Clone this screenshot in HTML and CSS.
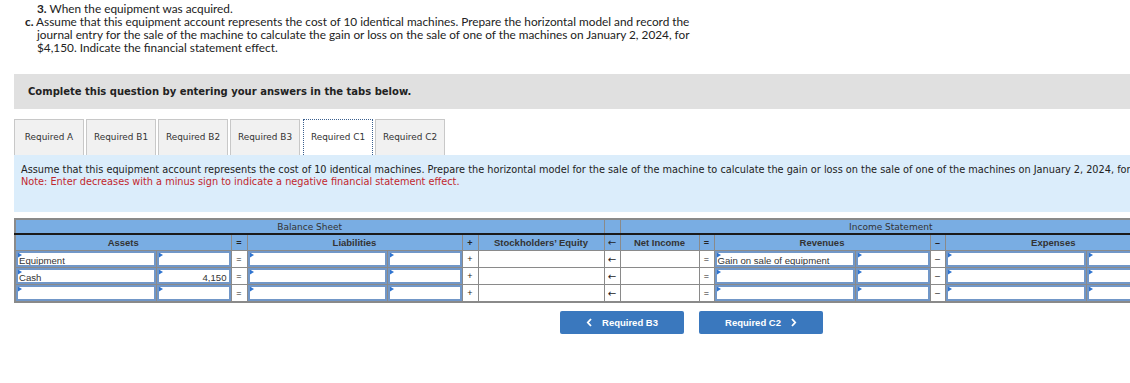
FILE: index.html
```html
<!DOCTYPE html>
<html lang="en">
<head>
  <meta charset="UTF-8" />
  <title>Horizontal Model - Required C1</title>
  <link rel="stylesheet" href="styles.css">
</head>
<body>
  <div class="question">
    <p class="sub"><b>3.</b> When the equipment was acquired.</p>
    <p class="part"><b>c.</b> Assume that this equipment account represents the cost of 10 identical machines. Prepare the horizontal model and record the journal entry for the sale of the machine to calculate the gain or loss on the sale of one of the machines on January 2, 2024, for $4,150. Indicate the financial statement effect.</p>
  </div>

  <div class="panel">
    <div class="prompt">Complete this question by entering your answers in the tabs below.</div>

    <div class="tabs">
      <div class="tab">Required A</div>
      <div class="tab">Required B1</div>
      <div class="tab">Required B2</div>
      <div class="tab">Required B3</div>
      <div class="tab active">Required C1</div>
      <div class="tab">Required C2</div>
    </div>

    <div class="info">
      <div class="line">Assume that this equipment account represents the cost of 10 identical machines. Prepare the horizontal model for the sale of the machine to calculate the gain or loss on the sale of one of the machines on January 2, 2024, for $4,150.</div>
      <div class="note">Note: Enter decreases with a minus sign to indicate a negative financial statement effect.</div>
    </div>

    <table class="model">
      <colgroup>
        <col style="width:141px"><col style="width:75px"><col style="width:16px">
        <col style="width:140px"><col style="width:75px"><col style="width:16px">
        <col style="width:126px"><col style="width:16px"><col style="width:79px">
        <col style="width:15px"><col style="width:141px"><col style="width:75px">
        <col style="width:15px"><col style="width:141px"><col style="width:76px">
      </colgroup>
      <tr class="group">
        <th colspan="7">Balance Sheet</th>
        <th></th>
        <th colspan="7">Income Statement</th>
      </tr>
      <tr class="heads">
        <th colspan="2">Assets</th>
        <th class="op">=</th>
        <th colspan="2">Liabilities</th>
        <th class="op">+</th>
        <th>Stockholders’ Equity</th>
        <th class="op arrow">←</th>
        <th>Net Income</th>
        <th class="op">=</th>
        <th colspan="2">Revenues</th>
        <th class="op">–</th>
        <th colspan="2">Expenses</th>
      </tr>
      <tr>
        <td class="in"><div class="box">Equipment</div></td>
        <td class="in"><div class="box num"></div></td>
        <td class="op">=</td>
        <td class="in"><div class="box"></div></td>
        <td class="in"><div class="box num"></div></td>
        <td class="op">+</td>
        <td></td>
        <td class="op arrow">←</td>
        <td></td>
        <td class="op">=</td>
        <td class="in"><div class="box">Gain on sale of equipment</div></td>
        <td class="in"><div class="box num"></div></td>
        <td class="op">–</td>
        <td class="in"><div class="box"></div></td>
        <td class="in"><div class="box num"></div></td>
      </tr>
      <tr>
        <td class="in"><div class="box">Cash</div></td>
        <td class="in"><div class="box num">4,150</div></td>
        <td class="op">=</td>
        <td class="in"><div class="box"></div></td>
        <td class="in"><div class="box num"></div></td>
        <td class="op">+</td>
        <td></td>
        <td class="op arrow">←</td>
        <td></td>
        <td class="op">=</td>
        <td class="in"><div class="box"></div></td>
        <td class="in"><div class="box num"></div></td>
        <td class="op">–</td>
        <td class="in"><div class="box"></div></td>
        <td class="in"><div class="box num"></div></td>
      </tr>
      <tr>
        <td class="in"><div class="box"></div></td>
        <td class="in"><div class="box num"></div></td>
        <td class="op">=</td>
        <td class="in"><div class="box"></div></td>
        <td class="in"><div class="box num"></div></td>
        <td class="op">+</td>
        <td></td>
        <td class="op arrow">←</td>
        <td></td>
        <td class="op">=</td>
        <td class="in"><div class="box"></div></td>
        <td class="in"><div class="box num"></div></td>
        <td class="op">–</td>
        <td class="in"><div class="box"></div></td>
        <td class="in"><div class="box num"></div></td>
      </tr>
    </table>

    <div class="nav">
      <button class="nav-btn">
        <svg class="chev" width="7" height="9" viewBox="0 0 7 9"><polyline points="5,1 1.8,4.5 5,8" fill="none" stroke="#fff" stroke-width="1.8"/></svg>
        Required B3
      </button>
      <button class="nav-btn">
        Required C2
        <svg class="chev" width="7" height="9" viewBox="0 0 7 9"><polyline points="2,1 5.2,4.5 2,8" fill="none" stroke="#fff" stroke-width="1.8"/></svg>
      </button>
    </div>
  </div>
</body>
</html>
```

FILE: styles.css
```css
html {
  overflow: hidden;
}

body {
  margin: 0;
  font-family: Lato, 'Open Sans', sans-serif;
  color: #222;
  width: 1200px;
}

.question {
  padding-top: 2px;
  font-size: 11.8px;
  line-height: 13px;
}

.question p {
  margin: 0;
}

.sub {
  padding-left: 37px;
}

.part {
  padding-left: 37px;
  text-indent: -12px;
  width: 670px;
}

.panel {
  margin-left: 14px;
  width: 1160px;
  font-family: 'DejaVu Sans', Verdana, sans-serif;
}

.prompt {
  margin-top: 20px;
  height: 35px;
  line-height: 35px;
  padding-left: 14px;
  background: #e0e0e0;
  font-size: 10px;
  font-weight: bold;
  color: #222;
}

.tabs {
  display: flex;
  gap: 2px;
  margin-top: 10px;
  height: 36px;
}

.tab {
  width: 70px;
  box-sizing: border-box;
  border: 1px solid #c8c8c8;
  border-bottom: none;
  background: #f1f1f1;
  font-size: 8.9px;
  line-height: 35px;
  text-align: center;
  color: #333;
}

.tab.active {
  background: #fff;
  border: 1px dotted #3a5f8e;
  border-bottom: none;
  margin-left: 1px;
}

.info {
  height: 57px;
  box-sizing: border-box;
  padding: 9px 0 0 7px;
  background: #dbedfb;
  font-size: 9.75px;
  line-height: 12px;
  color: #222;
  white-space: nowrap;
  overflow: hidden;
}

.note {
  color: #c1272d;
}

.model {
  margin-top: 6px;
  border-collapse: collapse;
  table-layout: fixed;
  width: 1147px;
  border: 2px solid #8a8a8a;
  font-family: 'Liberation Sans', Arial, sans-serif;
  font-size: 9.6px;
  color: #333;
}

.model th {
  background: #79ade3;
  border: 1px solid #8a8a8a;
  height: 15px;
  padding: 0;
  font-size: 9.5px;
  font-weight: bold;
  text-align: center;
}

.model .group th {
  height: 13px;
  font-family: 'DejaVu Sans', Verdana, sans-serif;
  font-weight: normal;
  font-size: 9px;
  border-bottom: 2px solid #1a1a1a;
}

.model td {
  border: 1px solid #8a8a8a;
  height: 16px;
  padding: 0;
  background: #fff;
}

.model .op {
  text-align: center;
  font-size: 9px;
  color: #222;
}

.model .arrow {
  font-family: 'DejaVu Sans', sans-serif;
  font-size: 10px;
  font-weight: normal;
}

.box {
  position: relative;
  height: 16px;
  box-sizing: border-box;
  border: 2px solid #7197c8;
  padding: 2px 2px 0 1px;
  line-height: 11px;
  white-space: nowrap;
  overflow: hidden;
}

.box::before {
  content: '';
  position: absolute;
  top: -1px;
  left: -1px;
  border-top: 3px solid transparent;
  border-bottom: 3px solid transparent;
  border-left: 5px solid #2f74d0;
}

.num {
  text-align: right;
}

.nav {
  display: flex;
  gap: 15px;
  margin: 8px 0 0 546px;
}

.nav-btn {
  display: flex;
  align-items: center;
  justify-content: center;
  gap: 9px;
  width: 124px;
  height: 23px;
  border: none;
  border-radius: 2px;
  background: #3a78be;
  color: #fff;
  font-family: 'Liberation Sans', Arial, sans-serif;
  font-size: 9.5px;
  font-weight: bold;
  cursor: pointer;
}
```
